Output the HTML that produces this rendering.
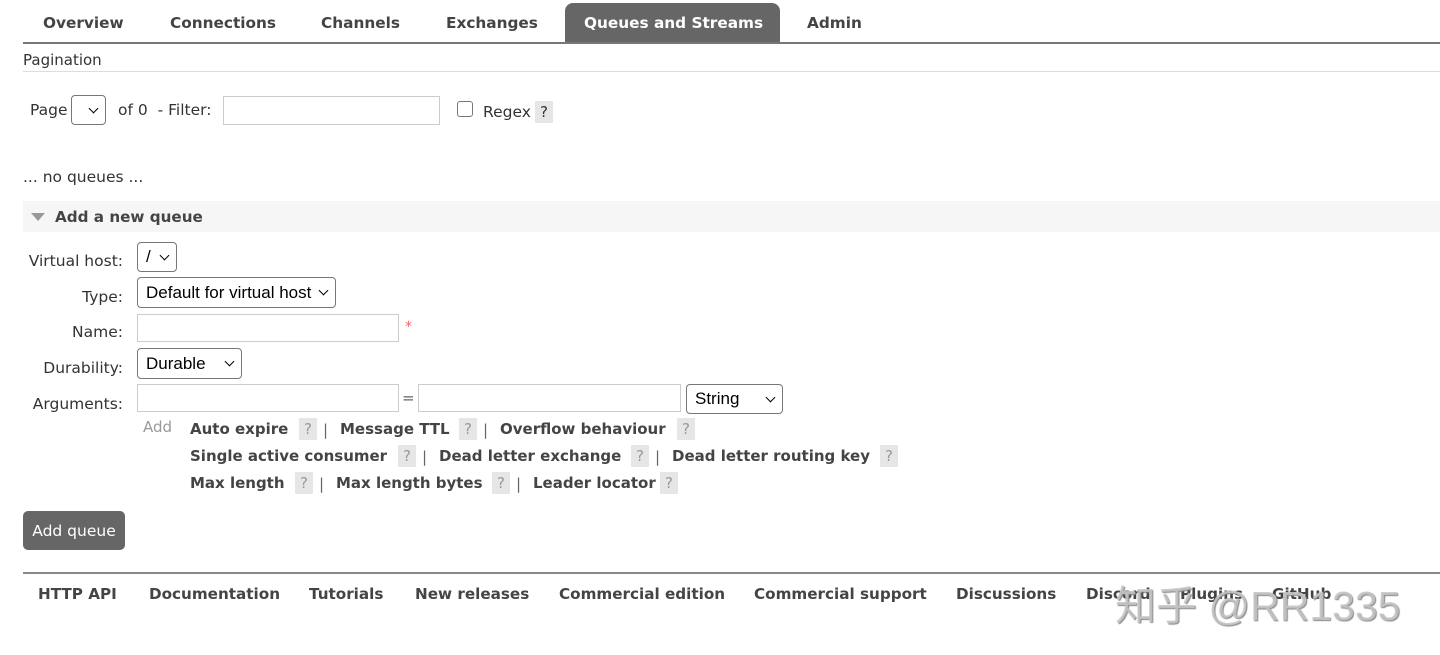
<!DOCTYPE html>
<html><head><meta charset="utf-8"><style>
body{margin:0;width:1440px;height:655px;background:#fff;font-family:"DejaVu Sans","Liberation Sans",sans-serif;color:#333;position:relative;overflow:hidden}
.a{position:absolute;white-space:nowrap}
.b{font-weight:bold}
.tab{font-size:15.3px;font-weight:bold;top:14px;color:#444}
.sel{border:1px solid #777;border-radius:4px;background:#fff;font-family:"Liberation Sans",sans-serif;font-size:17px;color:#000;box-sizing:border-box;padding:0 8px}
.sel:after{content:"";position:absolute;right:8px;top:9px;width:6px;height:6px;border-right:1.5px solid #000;border-bottom:1.5px solid #000;transform:rotate(45deg)}
.inp{border:1px solid #ccc;box-sizing:border-box;background:#fff}
.q{background:#e6e6e6;color:#999;font-size:15px;text-align:center;width:18px;height:22px;line-height:22px}
.lab{font-size:15.5px;text-align:right;width:123px;left:0}
.arg{font-size:15px;font-weight:bold;color:#444}
.sep{color:#666;font-size:15px}
.ft{font-size:15.2px;font-weight:bold;top:585px;color:#444}
</style></head><body>
<div class="a tab" style="left:43px">Overview</div>
<div class="a tab" style="left:170px">Connections</div>
<div class="a tab" style="left:321px">Channels</div>
<div class="a tab" style="left:446px">Exchanges</div>
<div class="a" style="left:565px;top:3px;width:215px;height:40px;background:#666;border-radius:8px 8px 0 0"></div>
<div class="a tab" style="left:584px;color:#fff">Queues and Streams</div>
<div class="a tab" style="left:807px">Admin</div>
<div class="a" style="left:23px;top:42px;width:1417px;height:2px;background:#777"></div>
<div class="a" style="left:23px;top:51px;font-size:15px">Pagination</div>
<div class="a" style="left:23px;top:71px;width:1417px;height:1px;background:#ddd"></div>
<div class="a" style="left:30px;top:101px;font-size:15.5px">Page</div>
<div class="a sel" style="left:71px;top:95px;width:35px;height:30px"></div>
<div class="a" style="left:118px;top:101px;font-size:15.5px">of 0 &nbsp;- Filter:</div>
<div class="a inp" style="left:223px;top:96px;width:217px;height:29px"></div>
<div class="a" style="left:457px;top:101px;width:16px;height:16px;border:1px solid #777;border-radius:3px;box-sizing:border-box"></div>
<div class="a" style="left:483px;top:103px;font-size:15.5px">Regex</div>
<div class="a q" style="left:535px;top:101px;color:#333">?</div>
<div class="a" style="left:23px;top:168px;font-size:15.5px">... no queues ...</div>
<div class="a" style="left:23px;top:201px;width:1417px;height:31px;background:#f6f6f6"></div>
<div class="a" style="left:31px;top:213px;width:0;height:0;border-left:7px solid transparent;border-right:7px solid transparent;border-top:8px solid #999"></div>
<div class="a b" style="left:55px;top:208px;font-size:15.2px;color:#444">Add a new queue</div>
<div class="a lab" style="top:252px">Virtual host:</div>
<div class="a sel" style="left:137px;top:242px;width:40px;height:30px;line-height:28px">/</div>
<div class="a lab" style="top:288px">Type:</div>
<div class="a sel" style="left:137px;top:277px;width:199px;height:31px;line-height:29px;padding-right:24px">Default for virtual host</div>
<div class="a lab" style="top:323px">Name:</div>
<div class="a inp" style="left:137px;top:314px;width:262px;height:28px"></div>
<div class="a" style="left:405px;top:319px;color:#e66;font-size:14px">*</div>
<div class="a lab" style="top:359px">Durability:</div>
<div class="a sel" style="left:137px;top:348px;width:105px;height:31px;line-height:29px">Durable</div>
<div class="a lab" style="top:395px">Arguments:</div>
<div class="a inp" style="left:137px;top:384px;width:262px;height:28px"></div>
<div class="a" style="left:402px;top:389px;font-size:15px;color:#666">=</div>
<div class="a inp" style="left:418px;top:384px;width:263px;height:28px"></div>
<div class="a sel" style="left:686px;top:384px;width:97px;height:30px;line-height:28px">String</div>
<div class="a" style="left:143px;top:418px;font-size:15px;color:#999">Add</div>
<div class="a arg" style="left:190px;top:420px">Auto expire</div>
<div class="a q" style="left:299px;top:418px">?</div><div class="a sep" style="left:323px;top:421px">|</div>
<div class="a arg" style="left:340px;top:420px">Message TTL</div>
<div class="a q" style="left:459px;top:418px">?</div><div class="a sep" style="left:483px;top:421px">|</div>
<div class="a arg" style="left:500px;top:420px">Overflow behaviour</div>
<div class="a q" style="left:677px;top:418px">?</div>
<div class="a arg" style="left:190px;top:447px">Single active consumer</div>
<div class="a q" style="left:398px;top:445px">?</div><div class="a sep" style="left:422px;top:448px">|</div>
<div class="a arg" style="left:439px;top:447px">Dead letter exchange</div>
<div class="a q" style="left:631px;top:445px">?</div><div class="a sep" style="left:655px;top:448px">|</div>
<div class="a arg" style="left:672px;top:447px">Dead letter routing key</div>
<div class="a q" style="left:880px;top:445px">?</div>
<div class="a arg" style="left:190px;top:474px">Max length</div>
<div class="a q" style="left:295px;top:472px">?</div><div class="a sep" style="left:319px;top:475px">|</div>
<div class="a arg" style="left:336px;top:474px">Max length bytes</div>
<div class="a q" style="left:492px;top:472px">?</div><div class="a sep" style="left:516px;top:475px">|</div>
<div class="a arg" style="left:533px;top:474px">Leader locator</div>
<div class="a q" style="left:660px;top:472px">?</div>
<div class="a" style="left:23px;top:511px;width:102px;height:39px;background:#666;border-radius:5px;color:#fff;font-size:15.5px;line-height:40px;text-align:center">Add queue</div>
<div class="a" style="left:23px;top:572px;width:1417px;height:2px;background:#888"></div>
<div class="a ft" style="left:38px">HTTP API</div>
<div class="a ft" style="left:149px">Documentation</div>
<div class="a ft" style="left:309px">Tutorials</div>
<div class="a ft" style="left:415px">New releases</div>
<div class="a ft" style="left:559px">Commercial edition</div>
<div class="a ft" style="left:754px">Commercial support</div>
<div class="a ft" style="left:956px">Discussions</div>
<div class="a ft" style="left:1086px">Discord</div>
<div class="a ft" style="left:1180px">Plugins</div>
<div class="a ft" style="left:1272px">GitHub</div>
<div class="a" style="left:1115px;top:572px;font-size:41px;color:rgba(200,200,200,0.85);font-family:'Liberation Sans','Noto Sans CJK SC',sans-serif;text-shadow:1px 1px 1px #888">知乎 @RR1335</div>
</body></html>
